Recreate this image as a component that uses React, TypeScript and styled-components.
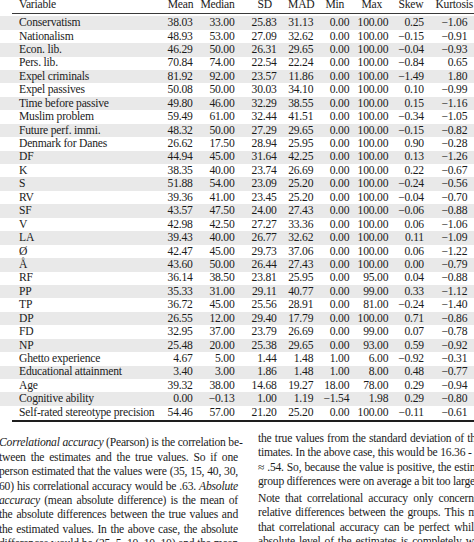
import React from 'react';
import styled, { createGlobalStyle } from 'styled-components';

const GlobalStyle = createGlobalStyle`
  html, body {
    margin: 0;
    padding: 0;
    background: #fff;
    overflow: hidden;
  }
  body {
    font-family: "Liberation Serif", "Times New Roman", serif;
    color: #1b1b1b;
  }
`;

// track widths so each number column ends where the scan has it
const COLS = '12px 146px 34.7px 41.8px 42.2px 36.6px 36px 39px 35.7px 43.3px 14px';

// width of the widest entry in each number column; header is centered over it
const BLOCK = [24.4, 34, 24, 24, 29, 33, 26, 26];

const HEADERS = ['Mean', 'Median', 'SD', 'MAD', 'Min', 'Max', 'Skew', 'Kurtosis'];

const ROWS: [string, ...string[]][] = [
    ['Conservatism', '38.03', '33.00', '25.83', '31.13', '0.00', '100.00', '0.25', '−1.06'],
    ['Nationalism', '48.93', '53.00', '27.09', '32.62', '0.00', '100.00', '−0.15', '−0.91'],
    ['Econ. lib.', '46.29', '50.00', '26.31', '29.65', '0.00', '100.00', '−0.04', '−0.93'],
    ['Pers. lib.', '70.84', '74.00', '22.54', '22.24', '0.00', '100.00', '−0.84', '0.65'],
    ['Expel criminals', '81.92', '92.00', '23.57', '11.86', '0.00', '100.00', '−1.49', '1.80'],
    ['Expel passives', '50.08', '50.00', '30.03', '34.10', '0.00', '100.00', '0.10', '−0.99'],
    ['Time before passive', '49.80', '46.00', '32.29', '38.55', '0.00', '100.00', '0.15', '−1.16'],
    ['Muslim problem', '59.49', '61.00', '32.44', '41.51', '0.00', '100.00', '−0.34', '−1.05'],
    ['Future perf. immi.', '48.32', '50.00', '27.29', '29.65', '0.00', '100.00', '−0.15', '−0.82'],
    ['Denmark for Danes', '26.62', '17.50', '28.94', '25.95', '0.00', '100.00', '0.90', '−0.28'],
    ['DF', '44.94', '45.00', '31.64', '42.25', '0.00', '100.00', '0.13', '−1.26'],
    ['K', '38.35', '40.00', '23.74', '26.69', '0.00', '100.00', '0.22', '−0.67'],
    ['S', '51.88', '54.00', '23.09', '25.20', '0.00', '100.00', '−0.24', '−0.56'],
    ['RV', '39.36', '41.00', '23.45', '25.20', '0.00', '100.00', '−0.04', '−0.70'],
    ['SF', '43.57', '47.50', '24.00', '27.43', '0.00', '100.00', '−0.06', '−0.88'],
    ['V', '42.98', '42.50', '27.27', '33.36', '0.00', '100.00', '0.06', '−1.06'],
    ['LA', '39.43', '40.00', '26.77', '32.62', '0.00', '100.00', '0.11', '−1.09'],
    ['Ø', '42.47', '45.00', '29.73', '37.06', '0.00', '100.00', '0.06', '−1.22'],
    ['Å', '43.60', '50.00', '26.44', '27.43', '0.00', '100.00', '0.00', '−0.79'],
    ['RF', '36.14', '38.50', '23.81', '25.95', '0.00', '95.00', '0.04', '−0.88'],
    ['PP', '35.33', '31.00', '29.11', '40.77', '0.00', '99.00', '0.33', '−1.12'],
    ['TP', '36.72', '45.00', '25.56', '28.91', '0.00', '81.00', '−0.24', '−1.40'],
    ['DP', '26.55', '12.00', '29.40', '17.79', '0.00', '100.00', '0.71', '−0.86'],
    ['FD', '32.95', '37.00', '23.79', '26.69', '0.00', '99.00', '0.07', '−0.78'],
    ['NP', '25.48', '20.00', '25.38', '29.65', '0.00', '93.00', '0.59', '−0.92'],
    ['Ghetto experience', '4.67', '5.00', '1.44', '1.48', '1.00', '6.00', '−0.92', '−0.31'],
    ['Educational attainment', '3.40', '3.00', '1.86', '1.48', '1.00', '8.00', '0.48', '−0.77'],
    ['Age', '39.32', '38.00', '14.68', '19.27', '18.00', '78.00', '0.29', '−0.94'],
    ['Cognitive ability', '0.00', '−0.13', '1.00', '1.19', '−1.54', '1.98', '0.29', '−0.80'],
    ['Self-rated stereotype precision', '54.46', '57.00', '21.20', '25.20', '0.00', '100.00', '−0.11', '−0.61'],
];

const Page = styled.div`
  width: 474px;
  height: 542px;
  overflow: hidden;
  position: relative;
`;

const Table = styled.div`
  width: 480px;
  margin-top: -2px;
  font-size: 11.6px;
  letter-spacing: -0.2px;
`;

const Row = styled.div<{ $shade?: boolean; $h?: number }>`
  display: grid;
  grid-template-columns: ${COLS};
  height: ${p => p.$h || 13.45}px;
  align-items: center;
  background: ${p => (p.$shade ? '#e9e9e9' : 'transparent')};
  white-space: nowrap;
  line-height: 1;
`;

const Name = styled.div`
  grid-column: 2;
  padding-left: 7px;
`;

const Num = styled.div`
  text-align: right;
`;

const Head = styled.div`
  display: flex;
  justify-content: flex-end;
`;

const HeadText = styled.div<{ $w: number }>`
  width: ${p => p.$w}px;
  display: flex;
  justify-content: center;
`;

const Rule = styled.div<{ $thick?: boolean }>`
  margin-left: 12px;
  height: ${p => (p.$thick ? 2.2 : 1.5)}px;
  background: ${p => (p.$thick ? '#1e1e1e' : '#3a3a3a')};
  margin-top: ${p => (p.$thick ? 0.8 : 1.5)}px;
  margin-bottom: ${p => (p.$thick ? 0 : 2.2)}px;
`;

const TextArea = styled.div`
  display: flex;
  align-items: flex-start;
  gap: 20px;
  margin-left: -1px;
  font-size: 11.6px;
  letter-spacing: -0.2px;
  line-height: 14.4px;
`;

const Column = styled.div<{ $top: number }>`
  width: 239px;
  flex: none;
  padding-top: ${p => p.$top}px;
`;

const Para = styled.div`
  & + & {
    margin-top: 2.4px;
  }
`;

const Line = styled.div<{ $last?: boolean }>`
  white-space: nowrap;
  text-align: ${p => (p.$last ? 'left' : 'justify')};
  text-align-last: ${p => (p.$last ? 'left' : 'justify')};
`;

function StatsTable() {
    return (
        <Table>
            <Row $h={13}>
                <Name>Variable</Name>
                {HEADERS.map((h, i) => (
                    <Head key={h}>
                        <HeadText $w={BLOCK[i]}>{h}</HeadText>
                    </Head>
                ))}
            </Row>
            <Rule />
            {ROWS.map(([name, ...vals], i) => (
                <Row key={name} $shade={i % 2 === 0}>
                    <Name>{name}</Name>
                    {vals.map((v, j) => (
                        <Num key={j}>{v}</Num>
                    ))}
                </Row>
            ))}
            <Rule $thick />
        </Table>
    );
}

export default function App() {
    return (
        <Page>
            <GlobalStyle />
            <StatsTable />
            <TextArea>
                <Column $top={14}>
                    <Para>
                        <Line><em>Correlational accuracy</em> (Pearson) is the correlation be-</Line>
                        <Line>tween the estimates and the true values. So if one</Line>
                        <Line>person estimated that the values were (35, 15, 40, 30,</Line>
                        <Line>60) his correlational accuracy would be .63. <em>Absolute</em></Line>
                        <Line><em>accuracy</em> (mean absolute difference) is the mean of</Line>
                        <Line>the absolute differences between the true values and</Line>
                        <Line>the estimated values. In the above case, the absolute</Line>
                        <Line>differences would be (25, 5, 10, 10, 10) and the mean</Line>
                    </Para>
                </Column>
                <Column $top={9.7}>
                    <Para>
                        <Line>the true values from the standard deviation of the es-</Line>
                        <Line>timates. In the above case, this would be 16.36 - 15.82</Line>
                        <Line>≈ .54. So, because the value is positive, the estimated</Line>
                        <Line $last>group differences were on average a bit too large.</Line>
                    </Para>
                    <Para>
                        <Line>Note that correlational accuracy only concerns the</Line>
                        <Line>relative differences between the groups. This means</Line>
                        <Line>that correlational accuracy can be perfect while the</Line>
                        <Line>absolute level of the estimates is completely wrong.</Line>
                    </Para>
                </Column>
            </TextArea>
        </Page>
    );
}
